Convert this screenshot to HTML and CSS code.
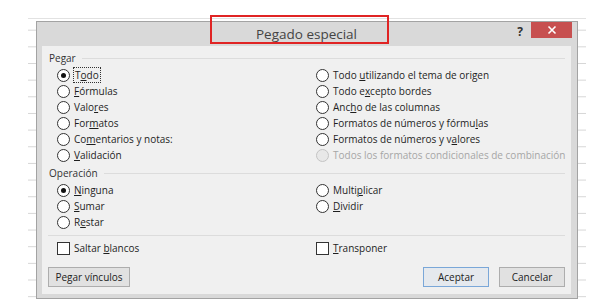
FILE: index.html
```html
<!DOCTYPE html>
<html lang="es">
<head>
  <meta charset="UTF-8" />
  <title>Pegado especial</title>
  <link rel="stylesheet" href="styles.css">
</head>
<body>

  <div class="sheet">
    <div class="dialog">
      <div class="titlebar">
        <span class="title">Pegado especial</span>
        <span class="help">?</span>
        <span class="close">
          <svg width="10" height="10" viewBox="0 0 10 10"><path d="M1.5 1.5 L8.5 8.5 M8.5 1.5 L1.5 8.5" stroke="#fff" stroke-width="1.6"/></svg>
        </span>
      </div>

      <div class="client">
        <div class="group-head"><span>Pegar</span></div>
        <div class="opts six">
          <div class="opt"><span class="radio on"></span><span class="focus">T<u>o</u>do</span></div>
          <div class="opt"><span class="radio"></span><span><u>F</u>órmulas</span></div>
          <div class="opt"><span class="radio"></span><span>Valo<u>r</u>es</span></div>
          <div class="opt"><span class="radio"></span><span>For<u>m</u>atos</span></div>
          <div class="opt"><span class="radio"></span><span>Co<u>m</u>entarios y notas:</span></div>
          <div class="opt"><span class="radio"></span><span><u>V</u>alidación</span></div>
          <div class="opt"><span class="radio"></span><span>Todo <u>u</u>tilizando el tema de origen</span></div>
          <div class="opt"><span class="radio"></span><span>Todo e<u>x</u>cepto bordes</span></div>
          <div class="opt"><span class="radio"></span><span>Anc<u>h</u>o de las columnas</span></div>
          <div class="opt"><span class="radio"></span><span>Formatos de números y fórmu<u>l</u>as</span></div>
          <div class="opt"><span class="radio"></span><span>Formatos de números y v<u>a</u>lores</span></div>
          <div class="opt off"><span class="radio"></span><span>Todos los formatos condicionales de combinación</span></div>
        </div>

        <div class="group-head op"><span>Operación</span></div>
        <div class="opts three">
          <div class="opt"><span class="radio on"></span><span><u>N</u>inguna</span></div>
          <div class="opt"><span class="radio"></span><span><u>S</u>umar</span></div>
          <div class="opt"><span class="radio"></span><span>R<u>e</u>star</span></div>
          <div class="opt"><span class="radio"></span><span>Multi<u>p</u>licar</span></div>
          <div class="opt"><span class="radio"></span><span><u>D</u>ividir</span></div>
        </div>

        <div class="sep"></div>

        <div class="opts one">
          <div class="opt"><span class="check"></span><span>Saltar <u>b</u>lancos</span></div>
          <div class="opt"><span class="check"></span><span><u>T</u>ransponer</span></div>
        </div>

        <div class="buttons">
          <button class="btn">Pe<u>g</u>ar vínculos</button>
          <button class="btn btn-ok">Aceptar</button>
          <button class="btn">Cancelar</button>
        </div>
      </div>
    </div>
  </div>

  <div class="mark"></div>

</body>
</html>
```

FILE: styles.css
```css
body { margin: 0; background: #fff; font-family: 'Open Sans', 'Noto Sans', sans-serif; font-size: 10px; color: #1e1e1e; }

/* spreadsheet behind the dialog */
.sheet {
  margin: 18px 0 0 28px; width: 558px; height: 282px; padding: 2px 0 0 8px; box-sizing: border-box;
  border-top: 1px solid #e2e2e2;
  background:
    linear-gradient(to bottom, transparent 15.6px, #d6d6d6 15.6px) 0 -5px / 100% 16.67px;
}

.dialog {
  width: 542px; height: 278px; box-sizing: border-box;
  background: #d9d9d9; border: 1px solid #a3a3a3;
  padding: 0 6px 4px 5px; display: flex; flex-direction: column;
}
.titlebar { height: 24px; display: flex; align-items: flex-start; position: relative; flex: none; }
.title { position: absolute; left: 0; right: 0; top: 3px; text-align: center; font-size: 13.5px; color: #444; }
.help { margin-left: auto; margin-right: 8px; margin-top: 1px; font-size: 12px; font-weight: bold; color: #333; }
.close {
  width: 41px; height: 16px; background: #c75050; margin-right: -1px;
  display: flex; align-items: center; justify-content: center;
}

.client { flex: 1; background: #f0f0f0; padding: 4px 6px 7px 6px; display: flex; flex-direction: column; }

.group-head { display: flex; align-items: center; gap: 6px; height: 16px; padding-left: 1px; color: #333; }
.group-head::after { content: ""; flex: 1; border-top: 1px solid #dcdcdc; }
.group-head.op { margin-top: 2px; }

.opts { display: grid; grid-template-columns: 259px 1fr; grid-auto-flow: column; grid-auto-rows: 16px; padding-left: 9px; margin-top: 1px; }
.opts.six { grid-template-rows: repeat(6, 16px); }
.opts.three { grid-template-rows: repeat(3, 16px); grid-auto-rows: 15.5px; }
.opts.one { grid-template-rows: 16px; margin-top: 4px; }

.opt { display: flex; align-items: center; gap: 4px; white-space: nowrap; }
.opt.off { color: #a6a6a6; }
.radio {
  width: 11px; height: 11px; border-radius: 50%; border: 1px solid #333; background: #fff;
  position: relative; flex: none;
}
.radio.on::after {
  content: ""; position: absolute; left: 3px; top: 3px; width: 5px; height: 5px; border-radius: 50%; background: #111;
}
.off .radio { border-color: #c4c4c4; background: #e8e8e8; }
.check { width: 11px; height: 11px; border: 1px solid #333; background: #fff; flex: none; }
.focus { outline: 1px dotted #333; outline-offset: 0; padding: 0 1px; }

.sep { border-top: 1px solid #dcdcdc; margin-top: 5px; }

.buttons { display: flex; gap: 10px; margin-top: auto; }
.btn {
  height: 20px; width: 66px; padding: 0; font: inherit; color: #222;
  background: #e1e1e1; border: 1px solid #adadad;
}
.btn:first-child { width: 82px; margin-right: auto; }
.btn-ok { border-color: #7aa7d8; background: #e5e9ee; }

/* red highlight over the title */
.mark { position: absolute; left: 210px; top: 15px; width: 179px; height: 29px; border: 2px solid #e02424; box-sizing: border-box; }
```
